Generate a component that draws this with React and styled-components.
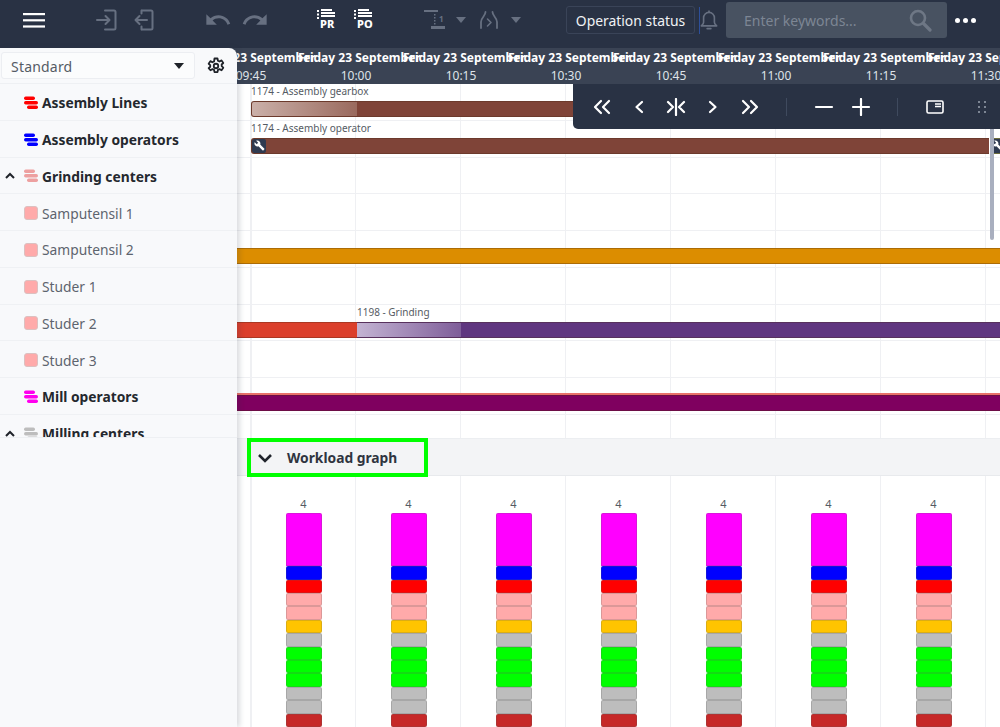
import React from 'react';
import styled, { createGlobalStyle } from 'styled-components';

const GlobalStyle = createGlobalStyle`
  html, body { margin: 0; padding: 0; background: #fff; }
  * { box-sizing: border-box; }
  body { font-family: "Noto Sans", "Open Sans", sans-serif; }
`;

const Page = styled.div`
  width: 1000px; height: 727px; overflow: hidden;
  display: flex; flex-direction: column; background: #293244;
`;
const TopBar = styled.header`
  height: 48px; flex: none; display: flex; align-items: center;
  padding: 0 0 8px 15px; background: #293244;
`;
const ToolGroup = styled.div`
  display: flex; align-items: center; margin-left: ${p => p.$ml || 0}px;
`;
const IconSlot = styled.div`
  width: ${p => p.$w || 37}px; height: 36px; flex: none;
  display: flex; align-items: center; justify-content: center;
  color: ${p => p.$bright ? '#ffffff' : '#677081'};
`;
const Caret = styled.span`
  width: 0; height: 0; border-left: 5px solid transparent; border-right: 5px solid transparent;
  border-top: 6px solid ${p => p.$color || '#677081'};
`;
const StatusButton = styled.div`
  width: 129px; height: 28px; margin-left: 41px; display: flex; align-items: center; justify-content: center;
  border: 1px solid #3a4458; border-radius: 3px; color: #f0f2f5; font-size: 13.9px; white-space: nowrap;
`;
const BellSlot = styled.div`
  width: 27px; height: 27px; margin-left: 4px; display: flex; align-items: center;
  border-left: 1px solid #2d4f9a; color: #677081;
`;
const Search = styled.div`
  width: 221px; height: 36px; display: flex; align-items: center; justify-content: space-between;
  padding: 0 15px 0 18px; background: #485261; border-radius: 3px;
  color: #7d8694; font-size: 14px;
`;
const More = styled.div`
  width: 36px; display: flex; justify-content: center; gap: 3px;
`;
const Dot = styled.span`
  width: 5px; height: 5px; border-radius: 50%; background: #fff;
`;
const Main = styled.div`
  flex: 1; min-height: 0; display: flex; background: #3a4354;
`;
const Sidebar = styled.aside`
  width: 237px; flex: none; position: relative; z-index: 3;
  background: #f8f9fb; border-radius: 0 8px 0 0;
  box-shadow: 3px 0 5px rgba(40, 50, 70, .16);
`;
const SideHead = styled.div`
  height: 36px; display: flex; align-items: center; padding-left: 1px; border-bottom: 1px solid #eef0f3;
`;
const Select = styled.div`
  width: 194px; height: 27px; padding: 1px 10px 0 9px; display: flex; align-items: center; justify-content: space-between;
  background: #fbfcfd; border: 1px solid #eceef2; border-radius: 3px;
  color: #555b65; font-size: 14px; letter-spacing: .2px;
`;
const GearSlot = styled.div`
  width: 42px; display: flex; justify-content: center; color: #1f2329;
`;
const SideList = styled.div`
  height: 354px; overflow: hidden; border-bottom: 1px solid #eef0f3;
`;
const SideRow = styled.div`
  height: 36.75px; padding-top: 2px; display: flex; align-items: center; border-bottom: 1.5px solid #eff1f4;
`;
const ChevSlot = styled.div`
  width: 24px; flex: none; display: flex; justify-content: center; padding-right: 4px; color: #1f2329;
`;
const RowIcon = styled.div`
  width: 14px; flex: none; margin-right: 4px; display: flex; align-items: center;
`;
const Swatch = styled.span`
  width: 14px; height: 14px; border-radius: 3px; background: #ffaaaa; border: 1px solid #dcc0c0;
`;
const RowText = styled.span`
  font-size: 13.8px; white-space: nowrap;
  font-weight: ${p => p.$bold ? 700 : 400};
  color: ${p => p.$bold ? '#24282e' : '#5d646e'};
`;
const Content = styled.div`
  flex: 1; min-width: 0; position: relative; overflow: hidden; display: flex; flex-direction: column;
`;
const TimeHead = styled.div`
  height: 36px; flex: none; background: #3a4354; overflow: hidden;
`;
const DateLine = styled.div`
  height: 18px; display: flex; margin-left: -44px; padding-top: 1px;
`;
const DateCell = styled.span`
  width: 105px; flex: none; white-space: nowrap; color: #fff; font-weight: 700; font-size: 12px; line-height: 17px;
`;
const TimeLine = styled.div`
  height: 18px; display: flex; margin-left: -38.5px; padding-top: 1px;
`;
const TimeCell = styled.span`
  width: 105px; flex: none; text-align: center; color: #dfe3e9; font-size: 12px; line-height: 17px;
`;
const gridLines = `repeating-linear-gradient(90deg, transparent 0 13px, #eff0f3 13px 14.5px, transparent 14.5px 105px)`;
const Chart = styled.div`
  height: 354px; flex: none; overflow: hidden; background: ${gridLines} #fff;
`;
const ChartRow = styled.div`
  height: 36.75px; border-bottom: 1.5px solid #eff0f3; position: relative;
  padding-top: ${p => p.$label ? 0 : 17}px;
`;
const BarLabel = styled.div`
  height: 17px; margin-left: ${p => p.$x}px;
  font-size: 10px; line-height: 14px; color: #555b63; white-space: nowrap;
`;
const Track = styled.div`
  display: flex; height: 16px; width: 763px;
`;
const Gap = styled.div`
  width: ${p => p.$w}px; flex: none;
`;
const Bar = styled.div`
  width: ${p => p.$w}px; flex: ${p => p.$grow ? 1 : 'none'}; height: 16px; display: flex; overflow: hidden;
  background: ${p => p.$color}; border: 0 solid rgba(70, 40, 20, .32); border-width: 1px 0;
  ${p => p.$round && 'border-left-width: 1px; border-radius: 3px 0 0 3px;'}
`;
const Ramp = styled.div`
  width: ${p => p.$w}px; flex: none; background: linear-gradient(90deg, ${p => p.$from}, ${p => p.$to});
`;
const Wrench = styled.div`
  width: 14px; height: 14px; margin-left: ${p => p.$edge ? 1 : 0}px; flex: none; display: flex; align-items: center; justify-content: center;
  background: #2f3a50; border-radius: 2px; color: #fff;
  ${p => p.$edge && 'border: 1px solid #6d6d3c; height: 16px;'}
`;
const OverlayLine = styled.div`
  position: absolute; left: 0; right: 0; top: 15px; height: 2px; background: #e8716a;
`;
const Scrollbar = styled.div`
  position: absolute; left: 753px; top: 36px; width: 4px; height: 156px; border-radius: 2px; background: #a9afbf; z-index: 1;
`;
const FloatBar = styled.div`
  position: absolute; left: 336px; right: 0; top: 36px; height: 45px; z-index: 2;
  display: flex; align-items: center; padding-left: 10px;
  background: #293244; border-radius: 0 0 0 5px; color: #fff;
`;
const FloatSlot = styled.div`
  width: ${p => p.$w || 37}px; height: 30px; flex: none; display: flex; align-items: center; justify-content: center;
`;
const Sep = styled.span`
  width: 1px; height: 18px; background: #3f4a5e;
`;
const WorkHead = styled.div`
  height: 38px; flex: none; background: #f3f4f6; border-top: 1px solid #eceef1; border-bottom: 1px solid #e8eaed;
`;
const WorkTitle = styled.div`
  width: 181px; height: 39px; margin-left: 10px; margin-top: -1px; display: flex; align-items: center; gap: 14px; padding-left: 6px;
  border: 4px solid #00ff00; font-size: 13.8px; font-weight: 700; color: #2f3440; white-space: nowrap;
  position: relative; z-index: 1;
`;
const WorkBody = styled.div`
  flex: 1; min-height: 0; overflow: hidden; display: flex; padding: 21px 0 0 14px; background: ${gridLines} #fff;
`;
const Column = styled.div`
  width: 105px; flex: none; display: flex; flex-direction: column; align-items: center;
`;
const Count = styled.div`
  height: 16px; font-size: 11px; line-height: 13px; color: #555b63;
`;
const Segment = styled.div`
  width: 36px; height: ${p => p.$h}px; flex: none; background: ${p => p.$color};
  border: 1px solid rgba(90, 90, 90, .22); border-radius: ${p => p.$top ? '2px 2px 0 0' : '2px'};
`;

const Svg = ({ w = 24, h = 24, children }) => (
  <svg width={w} height={h} viewBox={`0 0 ${w} ${h}`} fill="none" stroke="currentColor" strokeWidth="2" strokeLinecap="round" strokeLinejoin="round">{children}</svg>
);
const Hamburger = () => (
  <svg width="22" height="15" viewBox="0 0 22 15" fill="#fff"><rect y="0" width="22" height="2.2" /><rect y="6.2" width="22" height="2.2" /><rect y="12.4" width="22" height="2.2" /></svg>
);
const EnterIcon = () => (
  <Svg w={22} h={22}><path d="M9 1.5h9a1.5 1.5 0 0 1 1.5 1.5v16a1.5 1.5 0 0 1-1.5 1.5H9" /><path d="M1 11h12" /><path d="M9.5 7l4 4-4 4" /></Svg>
);
const ExitIcon = () => (
  <Svg w={22} h={22}><path d="M9 1.5h9a1.5 1.5 0 0 1 1.5 1.5v16a1.5 1.5 0 0 1-1.5 1.5H9" /><path d="M3 11h11" /><path d="M6.500 7l-4 4 4 4" /><path d="M8.500 1.500v3M8.500 17.500v3" /></Svg>
);
const Undo = () => (
  <svg width="28" height="28" viewBox="0 0 24 24" fill="currentColor"><path d="M12.5 8c-2.65 0-5.05.99-6.9 2.6L2 7v9h9l-3.62-3.62c1.39-1.16 3.16-1.88 5.12-1.88 3.54 0 6.55 2.31 7.6 5.5l2.37-.78C21.08 11.03 17.15 8 12.5 8z" /></svg>
);
const Redo = () => (
  <svg width="28" height="28" viewBox="0 0 24 24" fill="currentColor"><path d="M18.4 10.6C16.55 8.99 14.15 8 11.5 8c-4.65 0-8.58 3.03-9.96 7.22L3.9 16c1.05-3.19 4.05-5.5 7.6-5.5 1.95 0 3.73.72 5.12 1.88L13 16h9V7l-3.6 3.6z" /></svg>
);
const ListLetters = ({ text }) => (
  <svg width="22" height="22" viewBox="0 0 22 22" fill="#fff">
    <rect x="0" y="1" width="2" height="2" /><rect x="0" y="4.500" width="2" height="2" /><rect x="0" y="8" width="2" height="2" />
    <rect x="4" y="0" width="11" height="2" /><rect x="4" y="3" width="14" height="2" /><rect x="4" y="6" width="14" height="2" />
    <text x="3" y="19" fontFamily="'Noto Sans', sans-serif" fontWeight="800" fontSize="11">{text}</text>
  </svg>
);
const SplitIcon = () => (
  <svg width="21" height="20" viewBox="0 0 21 20" fill="#677081">
    <rect x="0" y="0" width="14" height="2" /><rect x="7" y="16" width="14" height="3" />
    <rect x="10" y="4" width="1.500" height="1.500" /><rect x="10" y="7" width="1.500" height="1.500" /><rect x="10" y="10" width="1.500" height="1.500" /><rect x="10" y="13" width="1.500" height="1.500" />
    <text x="15" y="12" fontFamily="'Noto Sans', sans-serif" fontSize="8" fontWeight="700">1</text>
  </svg>
);
const RoadIcon = () => (
  <Svg w={20} h={18}><path d="M6.500 1C6.500 5 2 6.500 2 11v6" strokeWidth="1.800" /><path d="M13.500 1C13.500 5 18 6.500 18 11v6" strokeWidth="1.800" /><path d="M8.500 8l3.500 3.500-3.500 3.500" strokeWidth="1.600" /></Svg>
);
const Bell = () => (
  <svg width="18" height="23" viewBox="0 0 20 24" fill="none" stroke="currentColor" strokeWidth="1.800" strokeLinejoin="round"><path d="M10 3a6 6 0 0 0-6 6v5c0 2-1.500 3-2.500 4h17c-1-1-2.500-2-2.500-4V9a6 6 0 0 0-6-6z" /><path d="M10 1v2" /><path d="M8 21h4" strokeLinecap="round" strokeWidth="2" /></svg>
);
const Magnifier = () => (
  <svg width="23" height="23" viewBox="0 0 23 23" fill="none" stroke="#6e7785" strokeWidth="2.600" strokeLinecap="round"><circle cx="9" cy="9" r="7" /><path d="M14.500 14.500l6.500 6.500" strokeWidth="3.200" /></svg>
);
const Gear = () => (
  <svg width="18" height="18" viewBox="0 0 24 24" fill="none" stroke="currentColor" strokeWidth="2.400" strokeLinejoin="round"><path d="M10 2h4l.6 3 2.100 1 2.700-1.500 2.300 3.500-2.200 2 .1 2.200 2.100 2-2.300 3.500-2.700-1.500-2.100 1-.6 3h-4l-.6-3-2.100-1-2.700 1.500L2.200 15l2.100-2v-2.200L2.200 9l2.300-3.500L7.200 7l2.200-1z" /><circle cx="12" cy="12" r="3" /></svg>
);
const ChevronUp = () => (
  <svg width="12" height="8" viewBox="0 0 12 8" fill="none" stroke="currentColor" strokeWidth="2"><path d="M2 6l4-4 4 4" /></svg>
);
const ChevronDown = () => (
  <svg width="16" height="10" viewBox="0 0 16 10" fill="none" stroke="#20242c" strokeWidth="2.600"><path d="M2 2l6 6 6-6" /></svg>
);
const StackIcon = ({ color }) => (
  <svg width="14" height="14" viewBox="0 0 14 14" fill={color}><rect x="0" y="0.500" width="11" height="3.400" rx="1.700" /><rect x="0" y="5" width="14" height="3.400" rx="1.700" /><rect x="3" y="9.500" width="11" height="3.400" rx="1.700" /></svg>
);
const WrenchGlyph = () => (
  <svg width="11" height="11" viewBox="0 0 24 24" fill="currentColor"><path d="M22.700 19l-9.100-9.100c.9-2.300.4-5-1.500-6.900-2-2-5-2.400-7.400-1.300L9 6 6 9 1.600 4.700C.4 7.100.9 10.100 2.900 12.100c1.900 1.900 4.600 2.400 6.900 1.500l9.100 9.100c.4.400 1 .4 1.400 0l2.300-2.300c.5-.4.5-1.100.1-1.400z" /></svg>
);
const Chevs = ({ d }) => (
  <svg width="20" height="18" viewBox="0 0 20 18" fill="none" stroke="#fff" strokeWidth="2.200" strokeLinecap="round" strokeLinejoin="round"><path d={d} /></svg>
);
const PanelIcon = () => (
  <svg width="18" height="14" viewBox="0 0 18 14" fill="none" stroke="#fff" strokeWidth="1.600"><rect x="1" y="1" width="16" height="12" rx="1.500" /><path d="M9 4h6M9 6.500h6" /></svg>
);
const Grip = () => (
  <svg width="8" height="12" viewBox="0 0 8 12" fill="#7d8694"><rect x="0" y="0" width="2" height="2" /><rect x="6" y="0" width="2" height="2" /><rect x="0" y="5" width="2" height="2" /><rect x="6" y="5" width="2" height="2" /><rect x="0" y="10" width="2" height="2" /><rect x="6" y="10" width="2" height="2" /></svg>
);

const sideRows = [
  { text: 'Assembly Lines', bold: true, stack: '#ff0000' },
  { text: 'Assembly operators', bold: true, stack: '#0000ff' },
  { text: 'Grinding centers', bold: true, stack: '#eda0a0', chev: true },
  { text: 'Samputensil 1' },
  { text: 'Samputensil 2' },
  { text: 'Studer 1' },
  { text: 'Studer 2' },
  { text: 'Studer 3' },
  { text: 'Mill operators', bold: true, stack: '#ff00ee' },
  { text: 'Milling centers', bold: true, stack: '#bdbdbd', chev: true },
];
const times = ['09:45', '10:00', '10:15', '10:30', '10:45', '11:00', '11:15', '11:30'];
const segments = [
  ['#ff00ff', 53.5, true], ['#0000ff', 13.4], ['#ff0000', 13.4], ['#ffaaaa', 13.4], ['#ffaaaa', 13.4], ['#ffc400', 13.4],
  ['#bdbdbd', 13.4], ['#00ff00', 13.4], ['#00ff00', 13.4], ['#00ff00', 13.4], ['#bdbdbd', 13.4], ['#bdbdbd', 13.4], ['#c62828', 13.4],
];

export default function App() {
  return (
    <Page>
      <GlobalStyle />
      <TopBar>
        <ToolGroup><IconSlot $bright><Hamburger /></IconSlot></ToolGroup>
        <ToolGroup $ml={36}><IconSlot><EnterIcon /></IconSlot><IconSlot><ExitIcon /></IconSlot></ToolGroup>
        <ToolGroup $ml={37}><IconSlot><Undo /></IconSlot><IconSlot><Redo /></IconSlot></ToolGroup>
        <ToolGroup $ml={36}><IconSlot $bright><ListLetters text="PR" /></IconSlot><IconSlot $bright><ListLetters text="PO" /></IconSlot></ToolGroup>
        <ToolGroup $ml={33}><IconSlot><SplitIcon /></IconSlot><IconSlot $w={16}><Caret /></IconSlot></ToolGroup>
        <ToolGroup $ml={1}><IconSlot><RoadIcon /></IconSlot><IconSlot $w={18}><Caret /></IconSlot></ToolGroup>
        <StatusButton>Operation status</StatusButton>
        <BellSlot><Bell /></BellSlot>
        <Search>Enter keywords...<Magnifier /></Search>
        <More><Dot /><Dot /><Dot /></More>
      </TopBar>
      <Main>
        <Sidebar>
          <SideHead>
            <Select>Standard<Caret $color="#1f2329" /></Select>
            <GearSlot><Gear /></GearSlot>
          </SideHead>
          <SideList>
            {sideRows.map(r => (
              <SideRow key={r.text}>
                <ChevSlot>{r.chev && <ChevronUp />}</ChevSlot>
                <RowIcon>{r.stack ? <StackIcon color={r.stack} /> : <Swatch />}</RowIcon>
                <RowText $bold={r.bold}>{r.text}</RowText>
              </SideRow>
            ))}
          </SideList>
        </Sidebar>
        <Content>
          <TimeHead>
            <DateLine>{Array.from({ length: 8 }, (_, i) => <DateCell key={i}>Friday 23 September</DateCell>)}</DateLine>
            <TimeLine>{times.map(t => <TimeCell key={t}>{t}</TimeCell>)}</TimeLine>
          </TimeHead>
          <Chart>
            <ChartRow $label>
              <BarLabel $x={14}>1174 - Assembly gearbox</BarLabel>
              <Track><Gap $w={14} /><Bar $color="#7f4438" $grow $round><Ramp $w={105} $from="#cbb0a9" $to="#9a6a5e" /></Bar></Track>
            </ChartRow>
            <ChartRow $label>
              <BarLabel $x={14}>1174 - Assembly operator</BarLabel>
              <Track><Gap $w={14} /><Bar $w={738} $color="#7f4438" $round><Wrench><WrenchGlyph /></Wrench></Bar><Wrench $edge><WrenchGlyph /></Wrench></Track>
            </ChartRow>
            <ChartRow />
            <ChartRow />
            <ChartRow><Track><Bar $color="#dc8d00" $grow /></Track></ChartRow>
            <ChartRow />
            <ChartRow $label>
              <BarLabel $x={120}>1198 - Grinding</BarLabel>
              <Track>
                <Bar $w={120} $color="#db402c" />
                <Bar $color="#603680" $grow><Ramp $w={104} $from="#c3b4d3" $to="#7f5d99" /></Bar>
              </Track>
            </ChartRow>
            <ChartRow />
            <ChartRow><OverlayLine /><Track><Bar $color="#7f005f" $grow /></Track></ChartRow>
            <ChartRow />
          </Chart>
          <WorkHead>
            <WorkTitle><ChevronDown />Workload graph</WorkTitle>
          </WorkHead>
          <WorkBody>
            {Array.from({ length: 7 }, (_, i) => (
              <Column key={i}>
                <Count>4</Count>
                {segments.map(([c, h, top], j) => <Segment key={j} $color={c} $h={h} $top={top} />)}
              </Column>
            ))}
          </WorkBody>
          <Scrollbar />
          <FloatBar>
            <FloatSlot><Chevs d="M9 3L3 9l6 6M17 3l-6 6 6 6" /></FloatSlot>
            <FloatSlot><Chevs d="M13 4L7.500 9l5.500 5" /></FloatSlot>
            <FloatSlot><Chevs d="M2 4l5 5-5 5M18 4l-5 5 5 5M10 1v16" /></FloatSlot>
            <FloatSlot><Chevs d="M7 4l5.500 5L7 14" /></FloatSlot>
            <FloatSlot><Chevs d="M3 3l6 6-6 6M11 3l6 6-6 6" /></FloatSlot>
            <FloatSlot><Sep /></FloatSlot>
            <FloatSlot><Chevs d="M2 9h16" /></FloatSlot>
            <FloatSlot><Chevs d="M2 9h16M10 1v16" /></FloatSlot>
            <FloatSlot><Sep /></FloatSlot>
            <FloatSlot><PanelIcon /></FloatSlot>
            <FloatSlot $w={57}><Grip /></FloatSlot>
          </FloatBar>
        </Content>
      </Main>
    </Page>
  );
}
